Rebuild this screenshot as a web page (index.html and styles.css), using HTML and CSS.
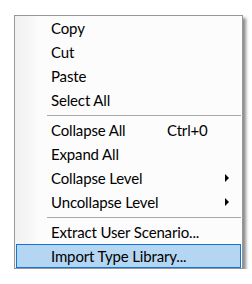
FILE: index.html
```html
<!DOCTYPE html>
<html>

<head>
  <title>Context Menu</title>
  <link rel="stylesheet" href="styles.css">
</head>

<body>
  <div class="menu">
    <div class="item">Copy</div>
    <div class="item">Cut</div>
    <div class="item">Paste</div>
    <div class="item">Select All</div>
    <div class="separator"></div>
    <div class="item"><span class="label">Collapse All</span><span class="shortcut">Ctrl+0</span></div>
    <div class="item">Expand All</div>
    <div class="item"><span class="label">Collapse Level</span><span class="arrow"></span></div>
    <div class="item"><span class="label">Uncollapse Level</span><span class="arrow"></span></div>
    <div class="separator"></div>
    <div class="item">Extract User Scenario...</div>
    <div class="item selected">Import Type Library...</div>
  </div>
</body>

</html>
```

FILE: styles.css
```css
body {
  margin: 0;
  padding: 15px 0 0 14px;
  background-color: #ffffff;
  font-family: "Segoe UI", Lato, "Noto Sans", sans-serif;
  font-size: 15px;
  color: #000000;
}

.menu {
  width: 225px;
  padding: 0 1px;
  border: 1px solid #979797;
  background: linear-gradient(to right, #f1f1f1 0, #f8f8f8 18px, #fcfcfc 24px, #fcfcfc 100%);
  box-shadow: 3px 3px 3px rgba(0, 0, 0, 0.45);
}

.item {
  display: flex;
  align-items: center;
  height: 24px;
  padding-left: 35px;
  box-sizing: border-box;
  white-space: nowrap;
  letter-spacing: -0.15px;
}

.item .label {
  width: 116px;
}

.item .arrow {
  margin-left: 58px;
  width: 0;
  height: 0;
  border-top: 4px solid transparent;
  border-bottom: 4px solid transparent;
  border-left: 4px solid #000000;
}

.item.selected {
  background-color: #b5d6f3;
  border: 1px solid #0f78d7;
  padding-left: 34px;
}

.separator {
  height: 6px;
  margin-left: 31px;
  background: linear-gradient(#a9a9a9, #a9a9a9) center / 100% 1px no-repeat;
}
```
